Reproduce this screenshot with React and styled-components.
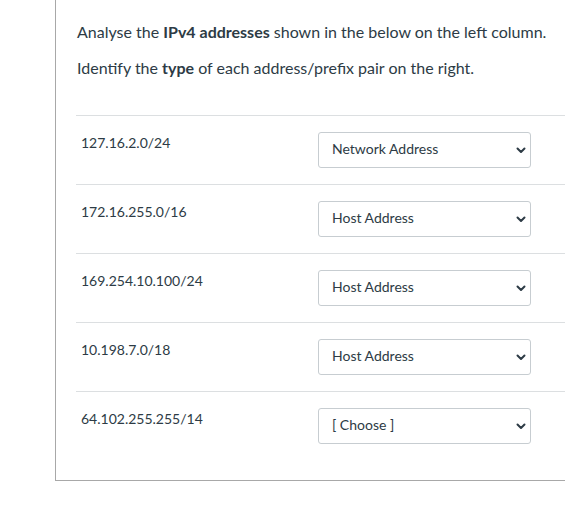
import React from "react";
import styled, { createGlobalStyle } from "styled-components";

const Global = createGlobalStyle`
  html, body { margin: 0; padding: 0; background: #fff; overflow: hidden; }
  body { font-family: Lato, "Noto Sans", sans-serif; color: #2d3b45; }
`;

const Panel = styled.div`
  margin-left: 55px;
  border-left: 1px solid #a8a8a8;
  border-bottom: 1px solid #a8a8a8;
  padding: 20px 0 20px 21px;
`;

const Question = styled.p`
  margin: 0 0 12px 0;
  font-size: 16px;
  line-height: 24px;
  b { font-weight: 700; }
`;

const Answers = styled.div`
  margin-top: 35px;
  margin-left: -1px;
`;

const Row = styled.div`
  display: flex;
  align-items: flex-start;
  border-top: 1px solid #dcdfe1;
  padding: 16px 0 16px 5px;
`;

const Addr = styled.div`
  width: 237px;
  flex: none;
  font-size: 14px;
  line-height: 20px;
  padding-top: 1px;
`;

const Select = styled.div`
  box-sizing: border-box;
  width: 213px;
  height: 36px;
  border: 1px solid #c7cdd1;
  border-radius: 3px;
  display: flex;
  align-items: center;
  justify-content: space-between;
  padding: 0 4px 3px 13px;
  font-size: 14px;
  color: #2d3b45;
  background: #fff;
`;

const Chevron = () => (
  <svg width="10" height="7" viewBox="0 0 10 7" style={{ marginTop: 4 }}>
    <path d="M1.5 1.5 L5 5 L8.5 1.5" fill="none" stroke="#2d3b45" strokeWidth="2" strokeLinecap="round" strokeLinejoin="round" />
  </svg>
);

const rows = [
  ["127.16.2.0/24", "Network Address"],
  ["172.16.255.0/16", "Host Address"],
  ["169.254.10.100/24", "Host Address"],
  ["10.198.7.0/18", "Host Address"],
  ["64.102.255.255/14", "[ Choose ]"],
];

export default function App() {
  return (
    <>
      <Global />
      <Panel>
        <Question>
          Analyse the <b>IPv4 addresses</b> shown in the below on the left column.
        </Question>
        <Question>
          Identify the <b>type</b> of each address/prefix pair on the right.
        </Question>
        <Answers>
          {rows.map(([a, v]) => (
            <Row key={a}>
              <Addr>{a}</Addr>
              <Select>
                <span>{v}</span>
                <Chevron />
              </Select>
            </Row>
          ))}
        </Answers>
      </Panel>
    </>
  );
}
